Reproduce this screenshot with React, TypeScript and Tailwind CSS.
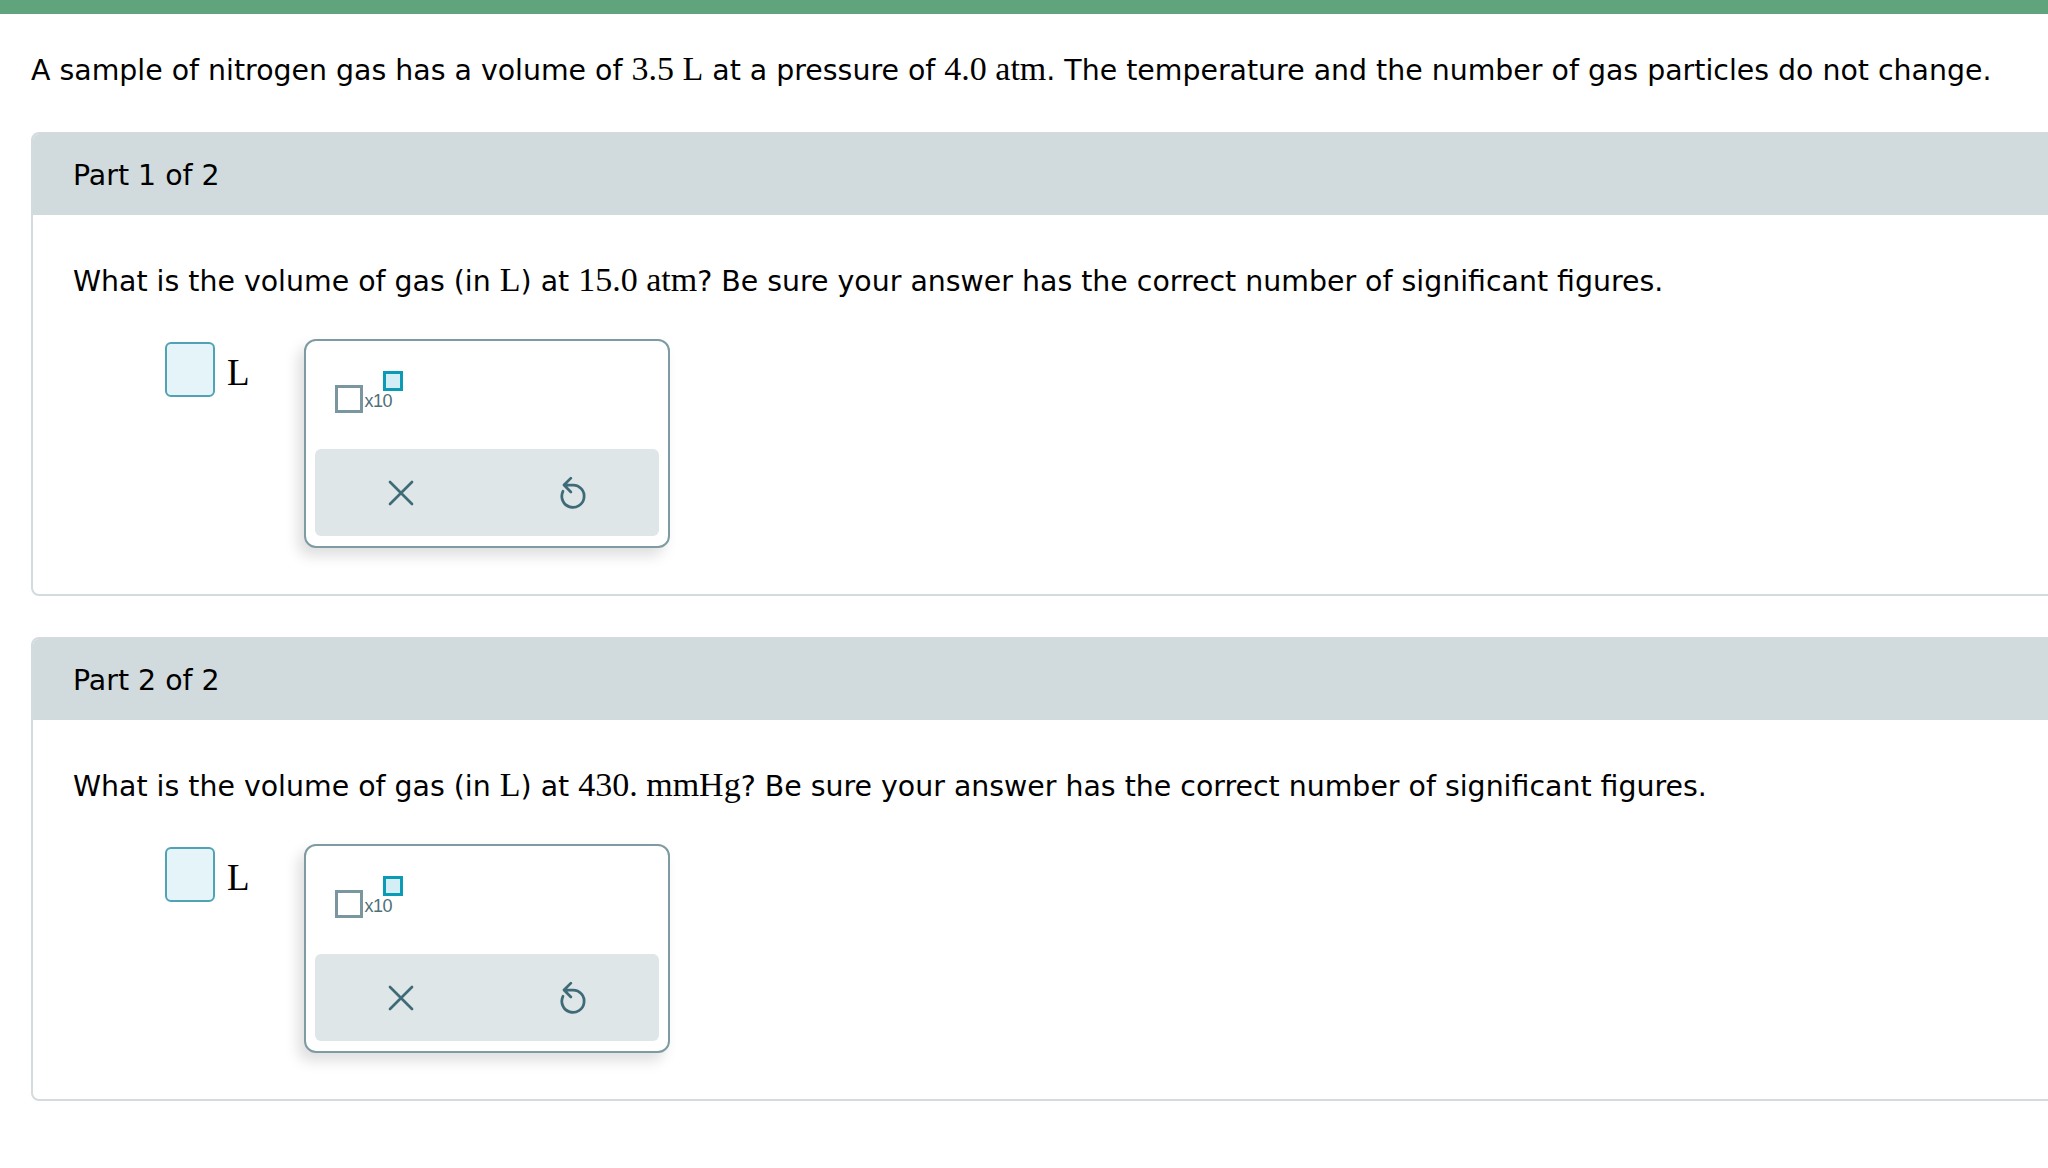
import React from "react";

const M = ({ children }: { children: React.ReactNode }) => (
  <span className="leading-none text-[34px]" style={{ fontFamily: '"Liberation Serif", serif' }}>
    {children}
  </span>
);

function XIcon() {
  return (
    <svg width="26" height="26" viewBox="0 0 26 26" fill="none">
      <path d="M2 2 L24 24 M24 2 L2 24" stroke="#3f6b78" strokeWidth="2.7" strokeLinecap="round" />
    </svg>
  );
}

function UndoIcon() {
  return (
    <svg width="34" height="34" viewBox="0 0 32 32" fill="none">
      <path
        d="M14 2 L7.5 8.5 L14 15 M7.5 8.5 H16 A10.5 10.5 0 1 1 6.55 14.4"
        stroke="#3f6b78"
        strokeWidth="2.6"
        strokeLinecap="round"
        strokeLinejoin="round"
      />
    </svg>
  );
}

function AnswerRow() {
  return (
    <div className="mt-[37px] flex items-start">
      <div className="ml-[92px] mt-[3px] h-[55px] w-[50px] rounded-[6px] border-2 border-[#4fa3b5] bg-[#e5f4f8]" />
      <div
        className="ml-[12px] mt-[14px] text-[37px] leading-[40px] text-black"
        style={{ fontFamily: '"Liberation Serif", serif' }}
      >
        L
      </div>
      <div className="ml-[54px] w-[366px] h-[209px] rounded-[12px] border-2 border-[#7e9ba3] bg-white shadow-[-6px_8px_14px_rgba(0,0,0,0.13)] flex flex-col">
        <div className="h-[108px] pl-[29px] pt-[30px]">
          <div className="flex h-[42px]">
            <div className="self-end h-[28px] w-[28px] border-[3px] border-[#7a969e]" />
            <div
              className="self-end mb-[3px] ml-[2px] text-[18px] leading-none text-[#4f7079] tracking-[-0.5px]"
              style={{ fontFamily: '"Liberation Sans", Arial, sans-serif' }}
            >
              x10
            </div>
            <div className="self-start ml-[-9px] h-[20px] w-[20px] border-[3px] border-[#0b9bb6] bg-[#d3eef4]" />
          </div>
        </div>
        <div className="mx-[9px] h-[87px] rounded-[6px] bg-[#dfe6e8] grid grid-cols-2">
          <div className="flex items-center justify-center">
            <XIcon />
          </div>
          <div className="flex items-center justify-center">
            <UndoIcon />
          </div>
        </div>
      </div>
    </div>
  );
}

function Part({ n, children }: { n: number; children: React.ReactNode }) {
  return (
    <div className="ml-[31px] w-[2100px] overflow-hidden rounded-[8px] border-2 border-[#d3dbde] bg-white">
      <div className="h-[81px] bg-[#d1dadd] pl-[40px] pt-[2px] flex items-center leading-[40px]">
        Part {n} of 2
      </div>
      <div className="pl-[40px] pb-[46px]">
        <div className="mt-[47px] leading-[40px]">{children}</div>
        <AnswerRow />
      </div>
    </div>
  );
}

export default function App() {
  return (
    <div
      className="min-h-screen w-full overflow-hidden bg-white text-[28.4px] text-black"
      style={{ fontFamily: '"DejaVu Sans", Verdana, sans-serif' }}
    >
      <div className="h-[14px] bg-[#5fa47c]" />
      <p className="pl-[31px] pt-[37px] leading-[40px] whitespace-nowrap">
        A sample of nitrogen gas has a volume of <M>3.5 L</M> at a pressure of <M>4.0 atm</M>. The temperature and the
        number of gas particles do not change.
      </p>
      <div className="mt-[41px]">
        <Part n={1}>
          What is the volume of gas (in <M>L</M>) at <M>15.0 atm</M>? Be sure your answer has the correct number of
          significant figures.
        </Part>
      </div>
      <div className="mt-[41px]">
        <Part n={2}>
          What is the volume of gas (in <M>L</M>) at <M>430. mmHg</M>? Be sure your answer has the correct number of
          significant figures.
        </Part>
      </div>
    </div>
  );
}
